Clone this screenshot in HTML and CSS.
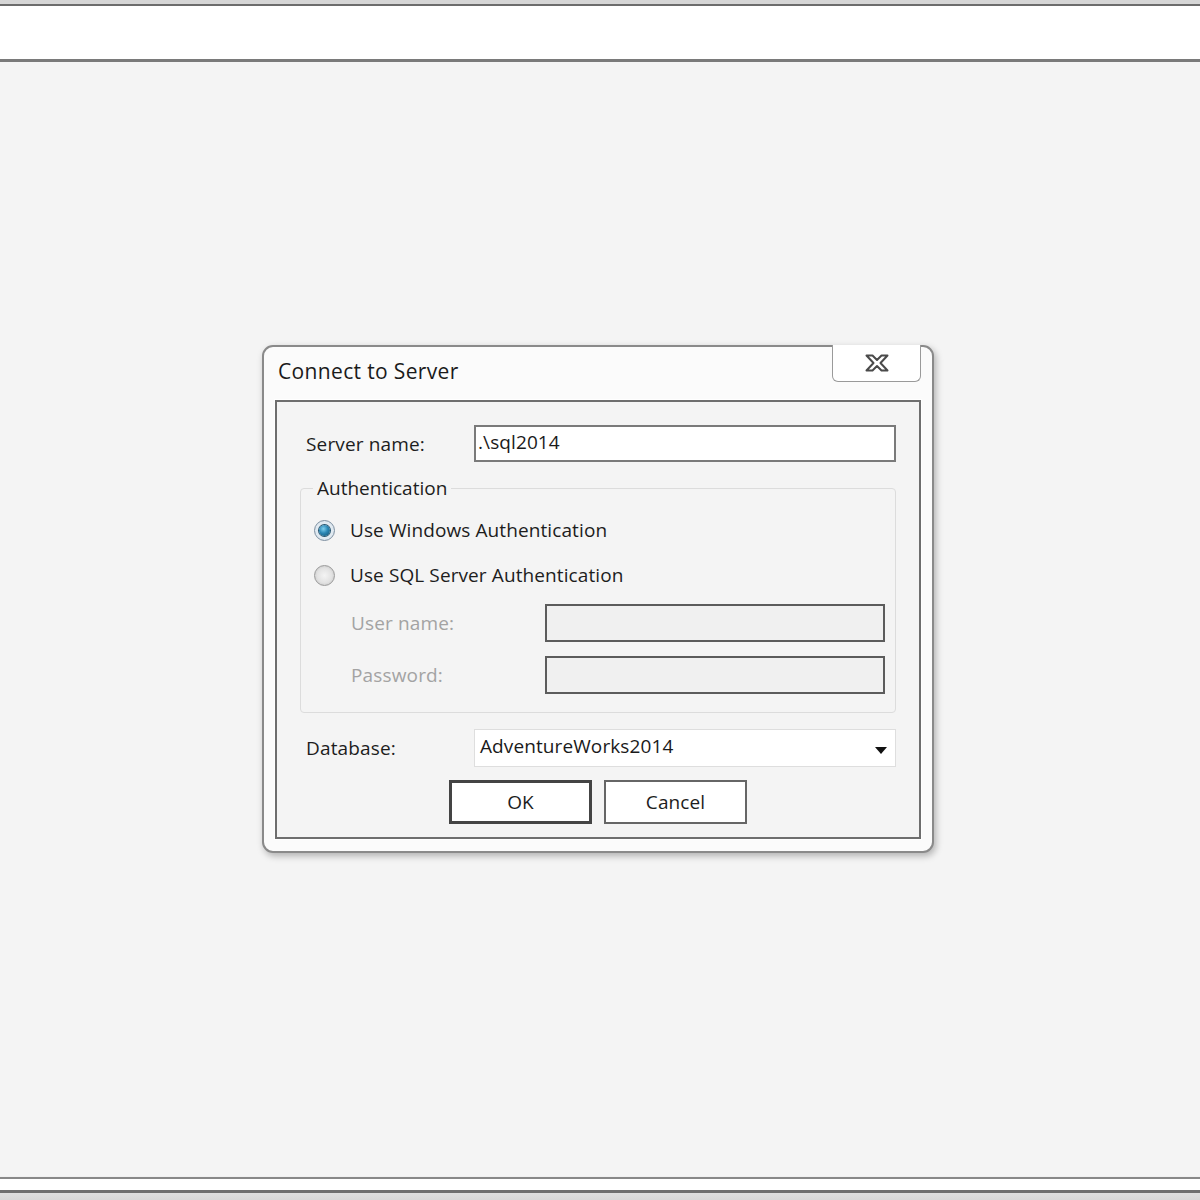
FILE: index.html
```html
<!DOCTYPE html>
<html>
<head>
<meta charset="utf-8">
<link rel="stylesheet" href="styles.css">
</head>
<body>
<div class="page">
  <div class="topbar"><div class="topbar-inner"></div></div>
  <main class="desk">
    <div class="dialog">
      <div class="titlebar">Connect to Server</div>
      <button class="close" aria-label="Close">
        <svg width="26" height="20" viewBox="0 0 26 20">
          <path d="M2.5 2.5 H8.5 L13 7 L17.5 2.5 H23.5 L16.5 10 L23.5 17.5 H17.5 L13 13 L8.5 17.5 H2.5 L9.5 10 Z" fill="#fff" stroke="#4a4a4a" stroke-width="2" stroke-linejoin="round"/>
        </svg>
      </button>
      <div class="panel">
        <div class="row">
          <label class="lbl">Server name:</label>
          <div class="field">.\sql2014</div>
        </div>
        <fieldset class="group">
          <legend>Authentication</legend>
          <div class="radio-row first">
            <span class="radio on"></span>
            <span>Use Windows Authentication</span>
          </div>
          <div class="radio-row">
            <span class="radio"></span>
            <span>Use SQL Server Authentication</span>
          </div>
          <div class="sub-row first">
            <label class="lbl dim">User name:</label>
            <div class="field disabled"></div>
          </div>
          <div class="sub-row">
            <label class="lbl dim">Password:</label>
            <div class="field disabled"></div>
          </div>
        </fieldset>
        <div class="row db">
          <label class="lbl">Database:</label>
          <div class="field select">
            <span>AdventureWorks2014</span>
            <svg class="arrow" width="12" height="7" viewBox="0 0 12 7"><path d="M0 0 H12 L6 7 Z" fill="#111"/></svg>
          </div>
        </div>
        <div class="buttons">
          <button class="btn default">OK</button>
          <button class="btn">Cancel</button>
        </div>
      </div>
    </div>
  </main>
  <div class="bottombar"><div class="bottombar-inner"></div></div>
</div>
</body>
</html>
```
FILE: styles.css
```css
* { box-sizing: border-box; }
html, body { margin: 0; padding: 0; }
body {
  background: #f4f4f4;
  font-family: "Open Sans", "Noto Sans", sans-serif;
  color: #1d1d1d;
}
.page {
  height: 1200px;
  display: flex;
  flex-direction: column;
}
.topbar {
  height: 62px;
  background: #d6d6d6;
  padding-top: 4px;
}
.topbar-inner {
  height: 58px;
  background: #fff;
  border-top: 2px solid #6c6c6c;
  border-bottom: 3px solid #7a7a7a;
}
.desk {
  flex: 1;
  padding: 283px 0 0 262px;
}
.bottombar {
  height: 24px;
  background: linear-gradient(#f0f0f0 0, #f0f0f0 1px, #d8d8d8 100%);
  padding-top: 1px;
}
.bottombar-inner {
  height: 16px;
  background: #fff;
  border-top: 2px solid #888;
  border-bottom: 3px solid #707070;
}

.dialog {
  position: relative;
  width: 672px;
  height: 508px;
  border: 2px solid #8a8a8a;
  border-radius: 11px;
  background: #fbfbfb;
  box-shadow: 2px 3px 7px rgba(0,0,0,0.28);
  display: flex;
  flex-direction: column;
}
.titlebar {
  height: 53px;
  padding: 10px 0 0 14px;
  font-size: 21px;
  letter-spacing: 0.35px;
  color: #1a1a1a;
}
.close {
  position: absolute;
  top: -2px;
  right: 11px;
  width: 89px;
  height: 37px;
  border: 1px solid #9a9a9a;
  border-top: none;
  border-radius: 0 0 6px 6px;
  background: #fff;
  padding: 0;
  display: flex;
  align-items: center;
  justify-content: center;
}
.close svg { margin-top: -1px; }

.panel {
  margin: 0 11px 12px 11px;
  flex: 1;
  border: 2px solid #6e6e6e;
  outline: 1px solid #fff;
  background: #f4f4f4;
  padding: 23px 23px 0 23px;
  display: flex;
  flex-direction: column;
}
.row {
  display: flex;
  align-items: center;
  padding-left: 6px;
  height: 37px;
}
.lbl {
  width: 168px;
  font-size: 19px;
  letter-spacing: 0.15px;
  color: #1d1d1d;
}
.field {
  flex: 1;
  height: 100%;
  background: #fff;
  border: 2px solid #7a7a7a;
  font-size: 19px;
  letter-spacing: 0.1px;
  padding: 2px 0 0 2px;
  color: #1a1a1a;
}
.group {
  margin: 14px 0 0 0;
  padding: 0 10px 0 12px;
  border: 1px solid #dcdcdc;
  border-radius: 4px;
  height: 237px;
}
.group legend {
  padding: 0 4px;
  font-size: 19px;
  letter-spacing: 0px;
  line-height: 24px;
  color: #1d1d1d;
}
.radio-row {
  display: flex;
  align-items: center;
  height: 30px;
  margin-top: 15px;
  font-size: 19px;
  letter-spacing: 0.1px;
  color: #1d1d1d;
}
.radio-row.first { margin-top: 15px; }
.radio {
  width: 21px;
  height: 21px;
  border-radius: 50%;
  border: 1px solid #9a9a9a;
  background: radial-gradient(circle at 50% 50%, #f4f4f4 0, #e2e2e2 55%, #cfcfcf 75%, #f2f2f2 100%);
  margin-right: 15px;
  margin-left: 1px;
  position: relative;
  flex: none;
}
.radio.on {
  border-color: #7d8fa0;
  background: radial-gradient(circle at 50% 50%, #f2f6fa 0, #dde7ef 70%, #eef3f7 100%);
}
.radio.on::after {
  content: "";
  position: absolute;
  left: 4px;
  top: 4px;
  width: 11px;
  height: 11px;
  border-radius: 50%;
  background: radial-gradient(circle at 40% 35%, #7fd0ee 0, #2a86b4 45%, #13506f 100%);
  box-shadow: 0 0 0 1px #24526c;
}
.sub-row {
  display: flex;
  align-items: center;
  height: 38px;
  margin-top: 14px;
  padding-left: 38px;
}
.sub-row.first { margin-top: 14px; }
.sub-row .lbl { width: 194px; }
.lbl.dim { color: #a3a3a3; }
.field.disabled {
  background: #f0f0f0;
  border: 2px solid #5c5c5c;
}
.row.db {
  margin-top: 16px;
  height: 38px;
}
.field.select {
  border: 1px solid #dedede;
  padding: 3px 8px 0 5px;
  display: flex;
  align-items: flex-start;
  justify-content: space-between;
}
.field.select .arrow { margin-top: 14px; }
.buttons {
  display: flex;
  justify-content: center;
  gap: 12px;
  margin-top: 13px;
}
.btn {
  width: 143px;
  height: 44px;
  background: #fff;
  border: 2px solid #666;
  font-family: "Open Sans", "Noto Sans", sans-serif;
  font-size: 19px;
  letter-spacing: 0.1px;
  color: #1d1d1d;
  padding: 0;
}
.btn.default { border: 3px solid #444; }
```
